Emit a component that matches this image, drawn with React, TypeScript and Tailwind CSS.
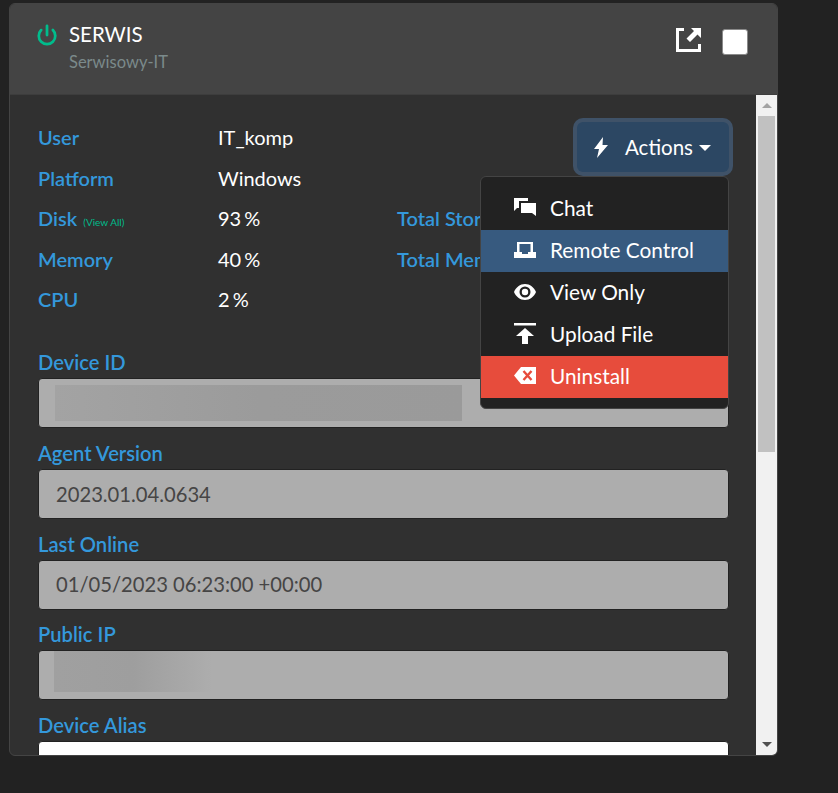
import { Power } from 'lucide-react'

const stats = [
  { label: 'User', value: 'IT_komp' },
  { label: 'Platform', value: 'Windows' },
  { label: 'Disk', value: '93 %', extra: 'Total Storage', link: true },
  { label: 'Memory', value: '40 %', extra: 'Total Memory' },
  { label: 'CPU', value: '2 %' },
]

function ChatIcon() {
  return (
    <svg viewBox="0 0 22 19" className="h-[19px] w-[22px]" fill="white">
      <path d="M0 0h14v3H5v7l-2 0-3 3z" />
      <path d="M7 5h15v13l-4-3H7z" />
    </svg>
  )
}

function LaptopIcon() {
  return (
    <svg viewBox="0 0 22 16" className="h-4 w-[22px]" fill="white">
      <path fillRule="evenodd" d="M3 0h16v10h3v6H0v-6h3zM5.500 2v8h11V2z" />
      <path d="M8 10h6v2H8z" fill="#375a7f" />
    </svg>
  )
}

function EyeIcon() {
  return (
    <svg viewBox="0 0 22 16" className="h-4 w-[22px]" fill="white">
      <path
        fillRule="evenodd"
        d="M11 0c5 0 9 3.500 11 8-2 4.500-6 8-11 8S2 12.500 0 8c2-4.500 6-8 11-8zm0 2.500a5.500 5.500 0 1 0 0 11 5.500 5.500 0 0 0 0-11z"
      />
      <circle cx="11" cy="8" r="3.200" />
    </svg>
  )
}

function UploadIcon() {
  return (
    <svg viewBox="0 0 22 21" className="h-[21px] w-[22px]" fill="white">
      <path d="M0 0h22v2.500H0z" />
      <path d="M11 5l9 8h-6v8H8v-8H2z" />
    </svg>
  )
}

function BackspaceIcon() {
  return (
    <svg viewBox="0 0 22 17" className="h-[17px] w-[22px]">
      <path d="M7 0h15v17H7L0 8.500z" fill="white" />
      <path d="M9.500 4l8 9M17.500 4l-8 9" stroke="#e74c3c" strokeWidth="2.400" />
    </svg>
  )
}

function Field({ label, value, blur }: { label: string; value?: string; blur?: 'id' | 'ip' }) {
  return (
    <div className="mb-[9.750px]">
      <div className="h-[31px] text-[20.200px] leading-[31px] font-semibold text-[#3498db]">{label}</div>
      <div className="flex h-[50px] items-center rounded-[4px] border border-[#222] bg-[#adadad] pl-[17px] text-[20.200px] text-[#464545]">
        {value}
        {blur === 'id' && <div className="-ml-px h-9 w-[407px] bg-gradient-to-r from-[#a3a3a3] via-[#9b9b9b] to-[#9a9a9a]" />}
        {blur === 'ip' && <div className="-ml-0.5 mb-2 h-[41px] w-[158px] bg-gradient-to-r from-[#a0a0a0] via-[#9e9e9e] to-[#adadad]" />}
      </div>
    </div>
  )
}

export default function App() {
  return (
    <div className="h-[793px] overflow-hidden bg-[#222] pt-[3px] pl-[9px] font-['Lato',sans-serif]">
      {/* Card */}
      <div className="flex h-[753px] w-[769px] flex-col overflow-hidden rounded-[6px] border border-[#444] bg-[#303030]">
        <div className="flex h-[91px] shrink-0 justify-between border-b border-[#3d3d3d] bg-[#444] pt-[15px] pr-[29px] pl-[26px]">
          <div className="flex gap-[11px]">
            <Power className="mt-[5px] h-[22px] w-[22px] text-[#00bc8c]" strokeWidth={3} />
            <div>
              <div className="text-[20.500px] leading-[30px] text-white">SERWIS</div>
              <div className="text-[16.500px] leading-[26px] text-[#7b8a8b]">Serwisowy-IT</div>
            </div>
          </div>
          <div className="flex gap-[21px] pt-[9px]">
            <svg viewBox="0 0 25 24" className="h-6 w-[25px]" fill="white">
              <path d="M0 0h8v3H3v18h19v-5h3v8H0z" />
              <path d="M15 0h10v10l-3.500-3.500-7.500 7.500-3.500-3.500 7.500-7.500z" />
            </svg>
            <div className="mt-[1px] h-[26px] w-[26px] rounded-[3px] border border-[#8a8a8a] bg-white" />
          </div>
        </div>

        <div className="flex min-h-0 flex-1">
          <div className="min-w-0 flex-1 overflow-hidden pt-[22px] pr-[27px] pl-[28px]">
            <div className="flex h-[230px] justify-between">
              <div className="grid w-[500px] auto-rows-[40.500px] grid-cols-[180px_179px_1fr] items-center text-[20px]">
                {stats.map((s) => (
                  <div key={s.label} className="contents">
                    <div className="font-semibold text-[#3498db]">
                      {s.label}
                      {s.link && <span className="ml-[6px] text-[10px] font-normal text-[#00bc8c]">(View All)</span>}
                    </div>
                    <div className="text-white [word-spacing:-2px]">{s.value}</div>
                    <div className="font-semibold whitespace-nowrap text-[#3498db]">{s.extra}</div>
                  </div>
                ))}
              </div>

              <div className="relative h-[50px] w-[152px]">
                <button className="mt-[5px] flex h-[50px] w-[152px] items-center rounded-[6px] bg-[#2c4763] pl-[17px] text-[20.500px] text-white ring-[4px] ring-[#3f5268]">
                  <svg viewBox="0 0 14 21" className="h-[21px] w-[14px]" fill="white">
                    <path d="M9 0L0 12h5l-2 9 11-13H8.500z" />
                  </svg>
                  <span className="ml-[17px]">Actions</span>
                  <span className="mt-[1px] ml-[6px] h-0 w-0 border-x-[6px] border-t-[6px] border-x-transparent border-t-white" />
                </button>

                {/* Dropdown */}
                <div className="absolute top-[59px] right-0 z-10 h-[233px] w-[249px] rounded-[6px] border border-[#444] bg-[#222] pt-[11px] text-[20.800px] text-white">
                  <div className="flex h-[42px] items-center pb-[3px]">
                    <div className="flex w-[69px] justify-end pr-[14px]"><ChatIcon /></div>
                    <span>Chat</span>
                  </div>
                  <div className="flex h-[42px] items-center bg-[#375a7f] pb-[3px]">
                    <div className="flex w-[69px] justify-end pr-[14px]"><LaptopIcon /></div>
                    <span>Remote Control</span>
                  </div>
                  <div className="flex h-[42px] items-center pb-[3px]">
                    <div className="flex w-[69px] justify-end pr-[14px]"><EyeIcon /></div>
                    <span>View Only</span>
                  </div>
                  <div className="flex h-[42px] items-center pb-[3px]">
                    <div className="flex w-[69px] justify-end pr-[14px]"><UploadIcon /></div>
                    <span>Upload File</span>
                  </div>
                  <div className="flex h-[42px] items-center bg-[#e74c3c] pb-[3px]">
                    <div className="flex w-[69px] justify-end pr-[14px]"><BackspaceIcon /></div>
                    <span>Uninstall</span>
                  </div>
                </div>
              </div>
            </div>

            <Field label="Device ID" blur="id" />
            <Field label="Agent Version" value="2023.01.04.0634" />
            <Field label="Last Online" value="01/05/2023 06:23:00 +00:00" />
            <Field label="Public IP" blur="ip" />
            <div className="h-[31px] text-[20.200px] leading-[31px] font-semibold text-[#3498db]">Device Alias</div>
            <div className="h-[50px] rounded-[4px] border border-[#222] bg-white" />
          </div>

          {/* Scrollbar */}
          <div className="flex w-[21px] shrink-0 flex-col items-center bg-[#f1f1f1]">
            <div className="mt-[8px] h-0 w-0 border-x-[5px] border-b-[5px] border-x-transparent border-b-[#a3a3a3]" />
            <div className="mt-[8px] h-[336px] w-[17px] bg-[#c1c1c1]" />
            <div className="mt-auto mb-[8px] h-0 w-0 border-x-[5px] border-t-[5px] border-x-transparent border-t-[#505050]" />
          </div>
        </div>
      </div>
    </div>
  )
}
